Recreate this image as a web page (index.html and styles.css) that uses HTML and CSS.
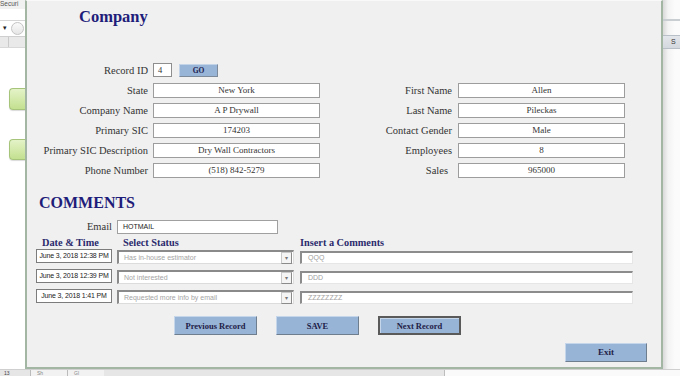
FILE: index.html
```html
<!DOCTYPE html>
<html>
<head>
<meta charset="utf-8">
<link rel="stylesheet" href="styles.css">
</head>
<body>
<div class="screen">
  <div class="main">
    <aside class="sheet-left">
      <div class="sec-bar">Securi</div>
      <div class="tool-row"><span class="caret">▾</span><span class="circle"></span></div>
      <div class="hdr-row"><span class="hdr-cell"></span></div>
      <div class="green-btn g1"></div>
      <div class="green-btn g2"></div>
    </aside>

    <section class="dialog">
      <h1 class="title">Company</h1>

      <div class="form">
        <label class="lbl">Record ID</label>
        <div class="rid">
          <span class="rid-box">4</span>
          <button class="go">GO</button>
        </div>
        <span></span><span></span>

        <label class="lbl">State</label>
        <div class="fld">New York</div>
        <label class="lbl r">First Name</label>
        <div class="fld">Allen</div>

        <label class="lbl">Company Name</label>
        <div class="fld">A P Drywall</div>
        <label class="lbl r">Last Name</label>
        <div class="fld">Pileckas</div>

        <label class="lbl">Primary SIC</label>
        <div class="fld">174203</div>
        <label class="lbl r">Contact Gender</label>
        <div class="fld">Male</div>

        <label class="lbl">Primary SIC Description</label>
        <div class="fld">Dry Wall Contractors</div>
        <label class="lbl r">Employees</label>
        <div class="fld">8</div>

        <label class="lbl">Phone Number</label>
        <div class="fld">(518) 842-5279</div>
        <label class="lbl r sales">Sales</label>
        <div class="fld">965000</div>
      </div>

      <h2 class="comments">COMMENTS</h2>

      <div class="email-row">
        <label class="email-lbl">Email</label>
        <div class="email-box">HOTMAIL</div>
      </div>

      <div class="col-heads">
        <span class="h-date">Date &amp; Time</span>
        <span class="h-status">Select Status</span>
        <span class="h-comment">Insert a Comments</span>
      </div>

      <div class="c-row">
        <div class="date-box">June 3, 2018 12:38 PM</div>
        <div class="combo"><span class="combo-txt">Has in-house estimator</span><span class="drop">▾</span></div>
        <div class="cmt">QQQ</div>
      </div>
      <div class="c-row">
        <div class="date-box">June 3, 2018 12:39 PM</div>
        <div class="combo"><span class="combo-txt">Not interested</span><span class="drop">▾</span></div>
        <div class="cmt">DDD</div>
      </div>
      <div class="c-row">
        <div class="date-box">June 3, 2018 1:41 PM</div>
        <div class="combo"><span class="combo-txt">Requested more info by email</span><span class="drop">▾</span></div>
        <div class="cmt">ZZZZZZZZ</div>
      </div>

      <div class="btn-row">
        <button class="btn">Previous Record</button>
        <button class="btn">SAVE</button>
        <button class="btn focus">Next Record</button>
      </div>
      <div class="exit-row">
        <button class="btn">Exit</button>
      </div>
    </section>

    <aside class="sheet-right">
      <div class="r-line"></div>
      <div class="r-bar">S</div>
    </aside>
  </div>
  <div class="tabs">
    <span class="tab-nav">13</span>
    <span class="tab">Sh</span>
    <span class="tab">Gl</span>
    <span class="tab-fill"></span>
    <span class="hscroll"></span>
  </div>
</div>
</body>
</html>
```

FILE: styles.css
```css
html, body {
  margin: 0;
  padding: 0;
  overflow: hidden;
}

.screen {
  width: 680px;
  height: 376px;
  background: #ffffff;
  font-family: "Liberation Serif", "Times New Roman", serif;
  color: #333;
  display: flex;
  flex-direction: column;
}

.main {
  display: flex;
  height: 369px;
}

/* ---------- background sheet, left ---------- */
.sheet-left {
  width: 25px;
  flex: none;
  background: #fff;
  display: flex;
  flex-direction: column;
  overflow: hidden;
}

.sec-bar {
  height: 9px;
  background: #f1f1f1;
  font-family: "Liberation Sans", Arial, sans-serif;
  font-size: 6.5px;
  line-height: 8px;
  color: #555;
  white-space: nowrap;
  padding-left: 0;
}

.tool-row {
  margin-top: 11px;
  height: 15px;
  border-top: 1px solid #d6d6d6;
  display: flex;
  align-items: center;
  gap: 4px;
  padding-left: 3px;
}

.caret {
  font-size: 7px;
  color: #222;
  line-height: 1;
}

.circle {
  width: 11px;
  height: 11px;
  border-radius: 50%;
  border: 1px solid #c4c4c4;
  background: linear-gradient(#fafafa, #e6e6e6);
  flex: none;
}

.hdr-row {
  height: 10px;
  background: #e9e9e9;
  border-top: 1px solid #cfcfcf;
  border-bottom: 1px solid #d8d8d8;
}

.hdr-cell {
  display: block;
  width: 8px;
  height: 10px;
  border-right: 1px solid #cacaca;
}

.green-btn {
  margin-left: 9px;
  width: 16px;
  border: 1px solid #a6c47a;
  border-right: none;
  border-radius: 4px 0 0 4px;
  background: linear-gradient(#e4f3c8, #c3e08f);
  box-shadow: 0 1px 1px rgba(0,0,0,0.15);
}

.g1 { margin-top: 40px; height: 20px; }
.g2 { margin-top: 29px; height: 19px; }

/* ---------- dialog ---------- */
.dialog {
  width: 634px;
  flex: none;
  background: #f0f0f0;
  border-left: 2px solid #a3b6a3;
  border-right: 2px solid #a3b6a3;
  border-bottom: 2px solid #a3b6a3;
  border-top: 1px solid #f9f9f9;
  height: 366px;
  display: flex;
  flex-direction: column;
}

.title {
  margin: 6px 0 0 52px;
  font-size: 16.5px;
  line-height: 20px;
  font-weight: bold;
  color: #1f1d7a;
}

.form {
  margin-top: 36px;
  display: grid;
  grid-template-columns: 126px 167px 138px 167px;
  grid-auto-rows: 15px;
  row-gap: 5px;
}

.lbl {
  font-size: 10.5px;
  line-height: 15px;
  text-align: right;
  padding-right: 5px;
  white-space: nowrap;
  color: #333;
}

.lbl.r { padding-right: 6px; }
.lbl.sales { padding-right: 10px; }

.fld {
  background: #fff;
  border: 1px solid #9d9d9d;
  box-sizing: border-box;
  height: 15px;
  font-size: 9px;
  line-height: 12px;
  text-align: center;
  color: #333;
}

.rid {
  display: flex;
  align-items: flex-start;
}

.rid-box {
  width: 19px;
  height: 14px;
  box-sizing: border-box;
  background: #fff;
  border: 1px solid #8e8e8e;
  font-size: 8.5px;
  line-height: 12px;
  padding-left: 4px;
  color: #333;
}

.go {
  margin: 1px 0 0 7px;
  width: 39px;
  height: 13px;
  padding: 0;
  background: #98b4d6;
  border: 1px solid;
  border-color: #c4d4e8 #7c8a9a #7c8a9a #c4d4e8;
  font-family: "Liberation Serif", serif;
  font-weight: bold;
  font-size: 7.5px;
  line-height: 11px;
  color: #1d2050;
}

.comments {
  margin: 16px 0 0 12px;
  font-size: 16px;
  line-height: 18px;
  font-weight: bold;
  color: #1f1d7a;
}

.email-row {
  margin: 8px 0 0 9px;
  display: flex;
  align-items: center;
}

.email-lbl {
  width: 76px;
  text-align: right;
  font-size: 10.5px;
  line-height: 14px;
  color: #333;
}

.email-box {
  margin-left: 5px;
  width: 161px;
  height: 14px;
  box-sizing: border-box;
  background: #fff;
  border: 1px solid #a0a0a0;
  font-family: "Liberation Sans", Arial, sans-serif;
  font-size: 7px;
  line-height: 12px;
  padding-left: 5px;
  color: #222;
}

.col-heads {
  margin: 2px 0 0 9px;
  display: flex;
  font-size: 10.3px;
  line-height: 13px;
  font-weight: bold;
  color: #2b2a6d;
}

.h-date { width: 81px; padding-left: 6px; box-sizing: border-box; }
.h-status { width: 183px; padding-left: 6px; box-sizing: border-box; }

.c-row {
  margin: 0 0 6px 9px;
  display: flex;
  align-items: flex-start;
  height: 14px;
}

.date-box {
  width: 76px;
  height: 14px;
  box-sizing: border-box;
  background: #fff;
  border: 1px solid #7c7c7c;
  font-family: "Liberation Sans", Arial, sans-serif;
  font-size: 7px;
  line-height: 12px;
  text-align: center;
  white-space: nowrap;
  letter-spacing: -0.15px;
  color: #222;
}

.combo {
  margin: 1px 0 0 5px;
  width: 177px;
  height: 14px;
  box-sizing: border-box;
  background: #fff;
  border-top: 2px solid #8a8a8a;
  border-left: 2px solid #8a8a8a;
  border-right: 1px solid #dcdcdc;
  border-bottom: 1px solid #dcdcdc;
  display: flex;
  align-items: center;
}

.combo-txt {
  flex: 1;
  font-family: "Liberation Sans", Arial, sans-serif;
  font-size: 7px;
  color: #a4a4a4;
  padding-left: 5px;
  white-space: nowrap;
}

.drop {
  width: 9px;
  height: 10px;
  margin-right: 1px;
  border: 1px solid #c8c8c8;
  border-right-color: #8a8a8a;
  border-bottom-color: #8a8a8a;
  background: #f4f4f4;
  font-size: 6px;
  line-height: 10px;
  text-align: center;
  color: #777;
}

.cmt {
  margin: 2px 0 0 6px;
  width: 333px;
  height: 13px;
  box-sizing: border-box;
  background: #fff;
  border-top: 2px solid #8c8c8c;
  border-left: 2px solid #8c8c8c;
  border-right: 1px solid #e6e6e6;
  border-bottom: 1px solid #e6e6e6;
  font-family: "Liberation Sans", Arial, sans-serif;
  font-size: 7px;
  line-height: 10px;
  padding-left: 6px;
  color: #a0a0a0;
}

.btn-row {
  margin: 7px 0 0 147px;
  display: flex;
  gap: 19px;
}

.btn {
  width: 83px;
  height: 19px;
  padding: 0;
  box-sizing: border-box;
  background: #97b4d6;
  border: 1px solid;
  border-color: #c6d6ea #6f7e8e #6f7e8e #c6d6ea;
  font-family: "Liberation Serif", serif;
  font-weight: bold;
  font-size: 8.5px;
  color: #1f2148;
}

.btn.focus {
  border: 2px solid #5a5a5a;
  box-shadow: inset 1px 1px 0 #c6d6ea;
}

.exit-row {
  margin: 6px 0 0 538px;
}

.exit-row .btn { width: 82px; font-size: 9px; }

/* ---------- background sheet, right ---------- */
.sheet-right {
  flex: 1;
  background: linear-gradient(to right, #d9d9d9, #f3f3f3 5px, #fbfbfb 12px);
  display: flex;
  flex-direction: column;
  overflow: hidden;
}

.r-line {
  margin-top: 19px;
  height: 2px;
  background: #c9ced3;
}

.r-bar {
  margin-top: 14px;
  height: 12px;
  background: linear-gradient(#e3e6ea, #d4d9df);
  border-top: 1px solid #b9bfc6;
  border-bottom: 1px solid #b9bfc6;
  font-family: "Liberation Sans", Arial, sans-serif;
  font-size: 7px;
  line-height: 12px;
  padding-left: 8px;
  color: #333;
}

/* ---------- sheet tabs ---------- */
.tabs {
  height: 6px;
  background: #e6e6e6;
  border-top: 1px solid #cfcfcf;
  display: flex;
  align-items: flex-start;
  overflow: hidden;
  font-family: "Liberation Sans", Arial, sans-serif;
  font-size: 5px;
  line-height: 6px;
  color: #444;
}

.tab-nav { width: 30px; padding-left: 4px; box-sizing: border-box; white-space: nowrap; }

.tab {
  width: 30px;
  background: #f2f2f2;
  border-left: 1px solid #bbb;
  padding-left: 6px;
  height: 6px;
  color: #888;
}

.tab-fill { width: 340px; }

.hscroll {
  flex: 1;
  height: 6px;
  background: #fafafa;
  border-left: 1px solid #bdbdbd;
}
```
